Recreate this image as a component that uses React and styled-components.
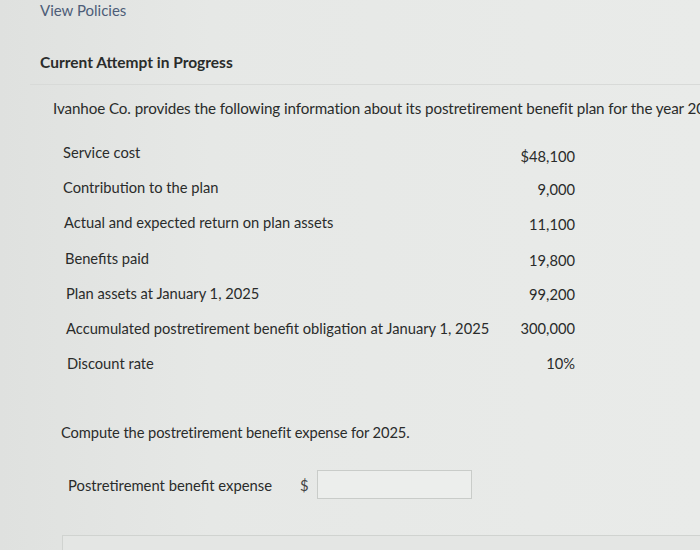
import styled, { createGlobalStyle } from "styled-components";

const GlobalStyle = createGlobalStyle`
  html, body {
    margin: 0;
    padding: 0;
    background: #e5e7e5;
  }
  body {
    font-family: Lato, "Open Sans", "Liberation Sans", sans-serif;
    color: #2a2c2b;
    width: 700px;
    height: 550px;
    overflow: hidden;
  }
`;

const Page = styled.div`
  width: 700px;
  height: 550px;
  overflow: hidden;
  background: linear-gradient(90deg, #dfe1df 0%, #e6e8e6 30%, #e9ebe9 100%);
`;

const PolicyLink = styled.a`
  display: block;
  padding: 0 0 0 40px;
  font-size: 15px;
  line-height: 20px;
  color: #4d5d78;
  text-decoration: none;
`;

const AttemptTitle = styled.h2`
  margin: 32px 0 0 40px;
  font-size: 15.5px;
  line-height: 20px;
  font-weight: 700;
  color: #2a2c2b;
`;

const Question = styled.section`
  margin: 12px 0 0 30px;
  border-top: 1px solid #d8dad8;
  padding: 13px 0 0 23px;
`;

const Intro = styled.p`
  margin: 0;
  font-size: 15.2px;
  line-height: 20px;
  white-space: nowrap;
  letter-spacing: -0.1px;
`;

const DataTable = styled.div`
  display: grid;
  grid-template-columns: 450px 62px;
  grid-auto-rows: 35.3px;
  margin: 16px 0 0 10px;
  font-size: 14.7px;
  align-items: center;
`;

const Label = styled.div`
  padding-left: ${(p) => p.$shift}px;
  white-space: nowrap;
`;

const Value = styled.div`
  text-align: right;
  transform: translateY(${(p) => p.$drop}px);
  white-space: nowrap;
`;

const Prompt = styled.p`
  margin: 41px 0 0 8px;
  font-size: 14.7px;
  line-height: 20px;
  letter-spacing: -0.1px;
`;

const AnswerRow = styled.div`
  display: flex;
  align-items: center;
  margin: 28px 0 0 15px;
  font-size: 14.8px;
`;

const AnswerLabel = styled.span`
  width: 232px;
`;

const Dollar = styled.span`
  width: 17px;
  color: #444;
`;

const AnswerInput = styled.input`
  width: 155px;
  height: 29px;
  box-sizing: border-box;
  border: 1px solid #c9ccc9;
  background: #eceeec;
  outline: none;
`;

const NextBox = styled.div`
  margin: 36px 0 0 9px;
  height: 40px;
  border: 1px solid #d0d3d0;
  border-right: none;
  background: #e4e6e4;
`;

const rows = [
  ["Service cost", "$48,100", 0, 4],
  ["Contribution to the plan", "9,000", 0, 2],
  ["Actual and expected return on plan assets", "11,100", 1, 2],
  ["Benefits paid", "19,800", 2, 2],
  ["Plan assets at January 1, 2025", "99,200", 3, 1],
  ["Accumulated postretirement benefit obligation at January 1, 2025", "300,000", 3, 0],
  ["Discount rate", "10%", 4, 0],
];

export default function App() {
  return (
    <Page>
      <GlobalStyle />
      <PolicyLink href="#">View Policies</PolicyLink>
      <AttemptTitle>Current Attempt in Progress</AttemptTitle>
      <Question>
        <Intro>
          Ivanhoe Co. provides the following information about its postretirement benefit plan for the year 2025.
        </Intro>
        <DataTable>
          {rows.map(([label, value, shift, drop]) => (
            <>
              <Label key={label} $shift={shift}>{label}</Label>
              <Value key={value} $drop={drop}>{value}</Value>
            </>
          ))}
        </DataTable>
        <Prompt>Compute the postretirement benefit expense for 2025.</Prompt>
        <AnswerRow>
          <AnswerLabel>Postretirement benefit expense</AnswerLabel>
          <Dollar>$</Dollar>
          <AnswerInput type="text" />
        </AnswerRow>
        <NextBox />
      </Question>
    </Page>
  );
}
